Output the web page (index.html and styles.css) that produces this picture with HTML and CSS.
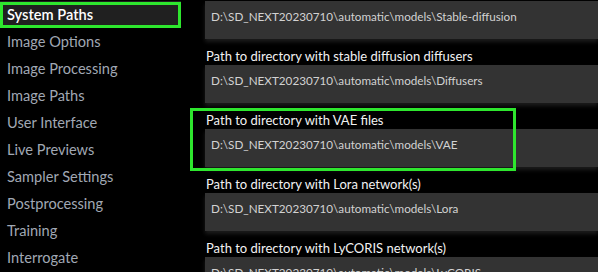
FILE: index.html
```html
<!DOCTYPE html>
<html>
<head>
<meta charset="utf-8">
<link rel="stylesheet" href="styles.css">
</head>
<body>
<div class="layout">
  <nav class="sidebar">
    <div class="item selected">System Paths</div>
    <div class="item">Image Options</div>
    <div class="item">Image Processing</div>
    <div class="item">Image Paths</div>
    <div class="item">User Interface</div>
    <div class="item">Live Previews</div>
    <div class="item">Sampler Settings</div>
    <div class="item">Postprocessing</div>
    <div class="item">Training</div>
    <div class="item">Interrogate</div>
  </nav>
  <main class="main">
    <div class="field">
      <div class="label">Path to directory with stable diffusion checkpoints</div>
      <div class="input">D:\SD_NEXT20230710\automatic\models\Stable-diffusion</div>
    </div>
    <div class="field">
      <div class="label">Path to directory with stable diffusion diffusers</div>
      <div class="input">D:\SD_NEXT20230710\automatic\models\Diffusers</div>
    </div>
    <div class="field highlighted">
      <div class="label">Path to directory with VAE files</div>
      <div class="input">D:\SD_NEXT20230710\automatic\models\VAE</div>
    </div>
    <div class="field">
      <div class="label">Path to directory with Lora network(s)</div>
      <div class="input">D:\SD_NEXT20230710\automatic\models\Lora</div>
    </div>
    <div class="field">
      <div class="label">Path to directory with LyCORIS network(s)</div>
      <div class="input">D:\SD_NEXT20230710\automatic\models\LyCORIS</div>
    </div>
  </main>
</div>
</body>
</html>
```
FILE: styles.css
```css
html, body {
  margin: 0;
  padding: 0;
  background: #000;
  overflow: hidden;
  height: 272px;
}
.layout {
  display: flex;
  font-family: "Lato", "Noto Sans", sans-serif;
}
.sidebar {
  width: 190px;
  flex: none;
  padding-top: 1px;
}
.item {
  height: 27px;
  line-height: 27px;
  padding-left: 7px;
  font-size: 14.6px;
  color: #a0a8b4;
  width: 181px;
  box-sizing: border-box;
  white-space: nowrap;
}
.item.selected {
  position: relative;
  color: #fff;
  background: #202020;
  font-weight: 600;
}
.item.selected::after {
  content: "";
  position: absolute;
  left: 0;
  right: 0;
  top: 1px;
  bottom: 0;
  border: 3px solid #2ee62e;
}
.main {
  flex: 1;
  padding-left: 15px;
  margin-top: -25px;
  min-width: 0;
  overflow: hidden;
}
.field {
  padding-top: 8px;
  position: relative;
}
.label {
  height: 18px;
  line-height: 18px;
  font-size: 13px;
  color: #f2f2f2;
  padding-left: 1px;
  white-space: nowrap;
}
.input {
  height: 38px;
  box-sizing: border-box;
  background: #333;
  color: #d2d2d2;
  font-size: 11.7px;
  line-height: 16px;
  padding: 7px 0 0 6px;
  white-space: nowrap;
  box-shadow: 0 3px 4px #1c1c1c;
}
.field.highlighted::after {
  content: "";
  position: absolute;
  left: -15px;
  top: 5px;
  width: 320px;
  height: 57px;
  border: 3px solid #2ee62e;
}
```
